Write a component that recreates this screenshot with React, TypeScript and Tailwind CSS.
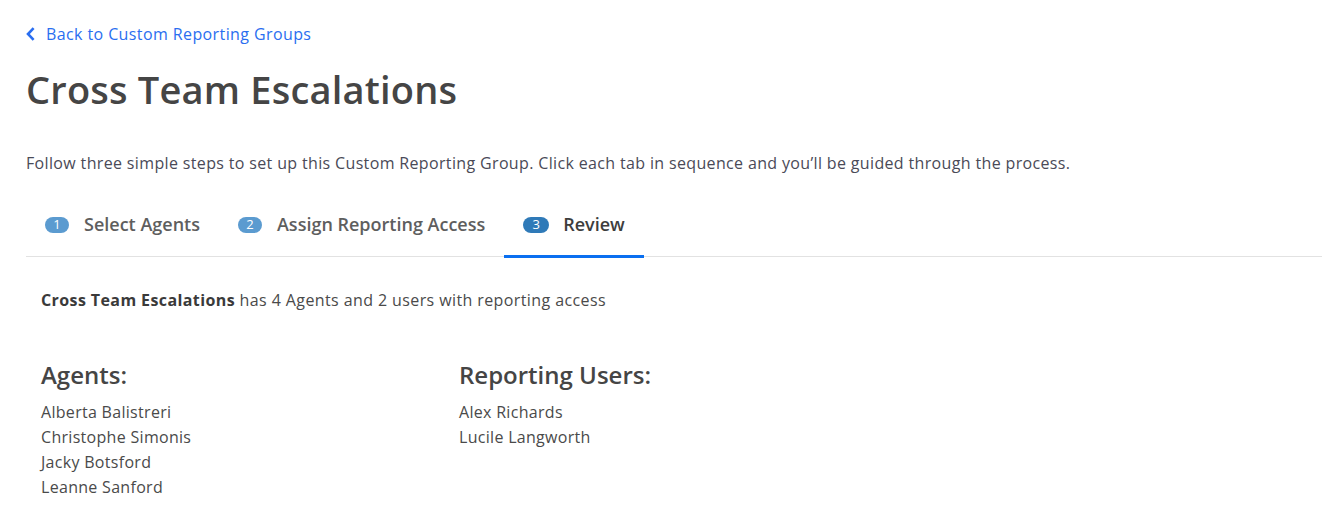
import React from 'react';

const tabs = [
  { num: 1, label: 'Select Agents' },
  { num: 2, label: 'Assign Reporting Access' },
  { num: 3, label: 'Review', active: true },
];

const agents = ['Alberta Balistreri', 'Christophe Simonis', 'Jacky Botsford', 'Leanne Sanford'];
const users = ['Alex Richards', 'Lucile Langworth'];

const App = () => {
  return (
    <div className="min-h-[517px] bg-white px-[26px] pt-[22px] pr-[19px] font-['Open_Sans',sans-serif] text-[#454545]">
      <a href="#" className="flex items-center gap-[11px] text-[16px] leading-6 tracking-[0.4px] text-[#2a6ef0]">
        <svg width="9" height="14" viewBox="0 0 9 14" fill="none">
          <path d="M7.6 1.2 2 7l5.6 5.8" stroke="#2a6ef0" strokeWidth="2.6" />
        </svg>
        Back to Custom Reporting Groups
      </a>

      <h1 className="mt-[20px] text-[38px] font-semibold leading-[46px] tracking-[0.2px] text-[#454545]">
        Cross Team Escalations
      </h1>

      <p className="mt-[39px] text-[16px] leading-6 tracking-[0.35px] text-[#4a4a57]">
        Follow three simple steps to set up this Custom Reporting Group. Click each tab in sequence and you’ll be guided
        through the process.
      </p>

      <div className="mt-[27px] flex border-b border-[#e2e2e2]">
        {tabs.map((tab) => (
          <div
            key={tab.num}
            className={
              tab.active
                ? 'relative flex h-[54px] items-center gap-[14px] px-[19px] pb-[9px]'
                : 'flex h-[54px] items-center gap-[15px] px-[19px] pb-[9px]'
            }
          >
            <span
              className={
                tab.active
                  ? 'flex h-[16px] w-[26px] items-center justify-center rounded-full bg-[#2f7ab8] text-[13px] leading-none text-white'
                  : 'flex h-[16px] w-[24px] items-center justify-center rounded-full bg-[#5b9bd0] text-[13px] leading-none text-white'
              }
            >
              {tab.num}
            </span>
            <span className={tab.active ? 'text-[18px] font-semibold text-[#3d3d3d]' : 'text-[18px] font-semibold text-[#5e5e5e]'}>
              {tab.label}
            </span>
            {tab.active && <span className="absolute bottom-[-2px] left-0 right-0 h-[3px] bg-[#0a6ff0]" />}
          </div>
        ))}
      </div>

      <div className="px-[15px]">
        <p className="mt-[31px] text-[16px] leading-6 tracking-[0.4px] text-[#4a4a4a]">
          <span className="font-bold text-[#3a3a3a]">Cross Team Escalations</span> has 4 Agents and 2 users with reporting
          access
        </p>

        <div className="mt-[47px] flex">
          <div className="w-[418px]">
            <h2 className="text-[24px] font-semibold leading-8 text-[#454545]">Agents:</h2>
            <ul className="mt-[9px] text-[16px] leading-[25px] tracking-[0.3px] text-[#4a4a4a]">
              {agents.map((a) => (
                <li key={a}>{a}</li>
              ))}
            </ul>
          </div>
          <div>
            <h2 className="text-[24px] font-semibold leading-8 text-[#454545]">Reporting Users:</h2>
            <ul className="mt-[9px] text-[16px] leading-[25px] tracking-[0.3px] text-[#4a4a4a]">
              {users.map((u) => (
                <li key={u}>{u}</li>
              ))}
            </ul>
          </div>
        </div>
      </div>
    </div>
  );
};

export default App;
